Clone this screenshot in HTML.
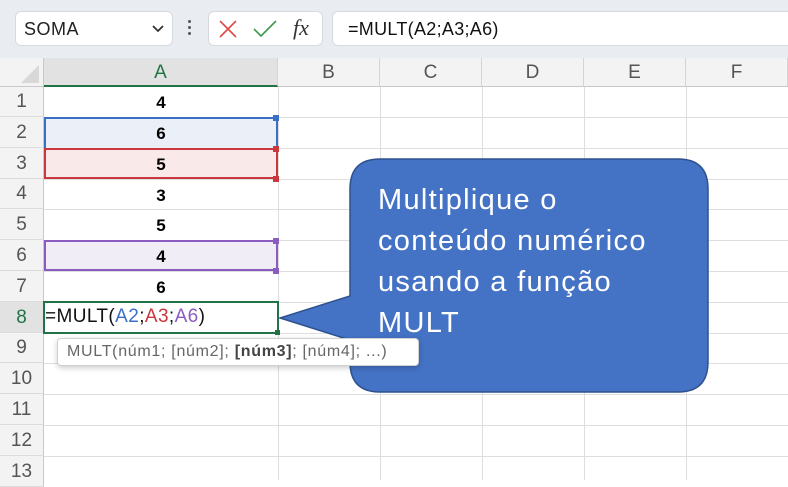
<!DOCTYPE html>
<html><head><meta charset="utf-8"><style>
*{margin:0;padding:0;box-sizing:border-box}
body{width:788px;height:480px;overflow:hidden;background:#fff;font-family:"Liberation Sans",sans-serif;position:relative}
.a{position:absolute}
.tb{left:0;top:0;width:788px;height:58px;background:#e9edf1}
.box{background:#fff;border:1px solid #d6dadf;border-radius:6px;top:11px;height:35px}
.rh{left:0;width:44px;background:#f3f3f3;color:#555;font-size:19px;text-align:center;border-bottom:1px solid #dcdcdc;border-right:1px solid #c8c8c8}
.ch{top:58px;height:29px;background:#f3f3f3;color:#555;font-size:19px;text-align:center;line-height:29px;border-right:1px solid #d4d4d4;border-bottom:1px solid #c8c8c8}
.hl{left:44px;width:744px;height:1px;background:#dedede}
.vl{top:87px;width:1px;height:393px;background:#dedede}
.v{left:44px;width:234px;text-align:center;font-weight:bold;font-size:17px}
</style></head><body>
<div class="a tb"></div>
<div class="a box" style="left:15px;width:158px"><span class="a" style="left:8px;top:7px;font-size:18px;color:#222;letter-spacing:0.5px">SOMA</span>
<svg class="a" style="left:136px;top:13px" width="12" height="8"><path d="M1 1l5 5 5-5" stroke="#333" stroke-width="1.8" fill="none"/></svg></div>
<div class="a" style="left:188px;top:20px;width:3px;height:3px;background:#555;border-radius:2px;box-shadow:0 6px 0 #555,0 12px 0 #555"></div>
<div class="a box" style="left:208px;width:115px">
<svg class="a" style="left:10px;top:8px" width="18" height="18"><path d="M1 1l16 16M17 1L1 17" stroke="#e04848" stroke-width="1.6"/></svg>
<svg class="a" style="left:44px;top:8px" width="24" height="18"><path d="M1 9l7 7L23 1" stroke="#3a9a4a" stroke-width="1.6" fill="none"/></svg>
<span class="a" style="left:84px;top:3px;font-family:'Liberation Serif',serif;font-style:italic;font-size:22px;color:#333">fx</span></div>
<div class="a box" style="left:332px;width:470px"><span class="a" style="left:15px;top:7px;font-size:18px;color:#111;letter-spacing:0.3px">=MULT(A2;A3;A6)</span></div>

<div class="a" style="left:0;top:58px;width:44px;height:29px;background:#f3f3f3;border-right:1px solid #c8c8c8;border-bottom:1px solid #c8c8c8"></div>
<svg class="a" style="left:20px;top:64px" width="20" height="20"><path d="M19 1V19H1Z" fill="#d8d8d8"/></svg>
<div class="a ch" style="left:44px;width:234px;background:#e2e2e2;color:#217346;border-bottom:2px solid #217346">A</div>
<div class="a ch" style="left:278px;width:102px">B</div>
<div class="a ch" style="left:380px;width:102px">C</div>
<div class="a ch" style="left:482px;width:102px">D</div>
<div class="a ch" style="left:584px;width:102px">E</div>
<div class="a ch" style="left:686px;width:102px">F</div>

<div class="a vl" style="left:278px"></div><div class="a vl" style="left:380px"></div><div class="a vl" style="left:482px"></div><div class="a vl" style="left:584px"></div><div class="a vl" style="left:686px"></div>
<div class="a hl" style="top:117px"></div><div class="a hl" style="top:148px"></div><div class="a hl" style="top:179px"></div><div class="a hl" style="top:209px"></div><div class="a hl" style="top:240px"></div><div class="a hl" style="top:271px"></div><div class="a hl" style="top:302px"></div><div class="a hl" style="top:333px"></div><div class="a hl" style="top:363px"></div><div class="a hl" style="top:394px"></div><div class="a hl" style="top:425px"></div><div class="a hl" style="top:456px"></div>

<div class="a rh" style="top:87px;height:30px;line-height:30px">1</div>
<div class="a rh" style="top:117px;height:31px;line-height:31px">2</div>
<div class="a rh" style="top:148px;height:31px;line-height:31px">3</div>
<div class="a rh" style="top:179px;height:30px;line-height:30px">4</div>
<div class="a rh" style="top:209px;height:31px;line-height:31px">5</div>
<div class="a rh" style="top:240px;height:31px;line-height:31px">6</div>
<div class="a rh" style="top:271px;height:31px;line-height:31px">7</div>
<div class="a rh" style="top:302px;height:31px;line-height:31px;background:#e2e2e2;color:#217346">8</div>
<div class="a rh" style="top:333px;height:30px;line-height:30px">9</div>
<div class="a rh" style="top:363px;height:31px;line-height:31px">10</div>
<div class="a rh" style="top:394px;height:31px;line-height:31px">11</div>
<div class="a rh" style="top:425px;height:31px;line-height:31px">12</div>
<div class="a rh" style="top:456px;height:31px;line-height:31px">13</div>

<div class="a" style="left:44px;top:117px;width:234px;height:31px;background:#ebf0f8;border:2px solid #3a6fc8;border-bottom:none"></div>
<div class="a" style="left:44px;top:148px;width:234px;height:31px;background:#f9e9e9;border:2px solid #c8383c"></div>
<div class="a" style="left:44px;top:240px;width:234px;height:31px;background:#f1edf7;border:2px solid #8a5cc0"></div>
<div class="a" style="left:273px;top:115px;width:6px;height:6px;background:#3a6fc8"></div>
<div class="a" style="left:273px;top:146px;width:6px;height:6px;background:#c8383c"></div>
<div class="a" style="left:273px;top:176px;width:6px;height:6px;background:#c8383c"></div>
<div class="a" style="left:273px;top:238px;width:6px;height:6px;background:#8a5cc0"></div>
<div class="a" style="left:273px;top:268px;width:6px;height:6px;background:#8a5cc0"></div>

<div class="a v" style="top:93px">4</div>
<div class="a v" style="top:124px">6</div>
<div class="a v" style="top:155px">5</div>
<div class="a v" style="top:186px">3</div>
<div class="a v" style="top:216px">5</div>
<div class="a v" style="top:247px">4</div>
<div class="a v" style="top:278px">6</div>

<div class="a" style="left:43px;top:301px;width:236px;height:33px;border:2px solid #217346;background:#fff"></div>
<div class="a" style="left:275px;top:330px;width:5px;height:5px;background:#217346"></div>
<div class="a" style="left:45px;top:306px;font-size:19px;color:#111;letter-spacing:0.4px">=MULT(<span style="color:#3a6fc8">A2</span>;<span style="color:#c8383c">A3</span>;<span style="color:#8a5cc0">A6</span>)</div>

<svg class="a" style="left:0;top:0" width="788" height="480">
<path d="M380 159H678Q708 159 708 189V362Q708 392 678 392H380Q350 392 350 362V340L280 318L350 296V189Q350 159 380 159Z" fill="#4472c4" stroke="#2f528f" stroke-width="1.5"/>
</svg>
<div class="a" style="left:378px;top:180px;color:#fff;font-size:29px;line-height:41px;letter-spacing:1.3px;white-space:nowrap">Multiplique o<br>conteúdo numérico<br>usando a função<br>MULT</div>

<div class="a" style="left:57px;top:338px;width:362px;height:28px;background:#fff;border:1px solid #d0d0d0;border-radius:4px;box-shadow:0 2px 6px rgba(0,0,0,.2);font-size:16px;color:#666;line-height:26px;padding-left:9px;letter-spacing:0.7px;white-space:nowrap">MULT(núm1; [núm2]; <b style="color:#444">[núm3]</b>; [núm4]; ...)</div>
</body></html>
